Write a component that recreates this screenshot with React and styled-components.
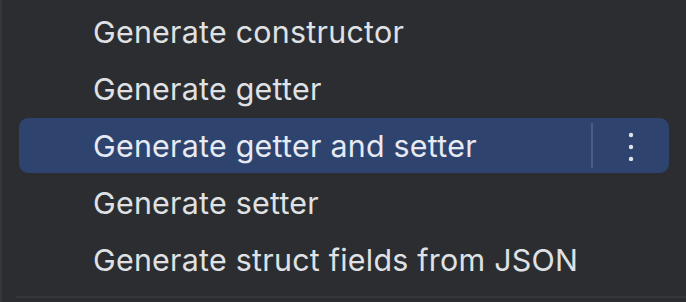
import styled, { createGlobalStyle } from "styled-components";

const GlobalStyle = createGlobalStyle`
  html, body {
    margin: 0;
    padding: 0;
    background: #2b2d30;
  }
  body {
    width: 686px;
    height: 302px;
    overflow: hidden;
    font-family: Inter, "Noto Sans", sans-serif;
  }
`;

const Popup = styled.div`
  box-sizing: border-box;
  width: 686px;
  height: 302px;
  background: #2b2d30;
  border-left: 2px solid #35373b;
  position: relative;
  display: flex;
  flex-direction: column;
  padding: 3px 17px 0 17px;

  &::after {
    content: "";
    position: absolute;
    left: 14px;
    right: 0;
    bottom: 4px;
    height: 2px;
    background: #35373b;
  }
`;

const Row = styled.div`
  height: 57px;
  display: flex;
  align-items: center;
  padding: 1px 0;
  box-sizing: border-box;
`;

const Item = styled.div`
  flex: 1;
  height: 55px;
  display: flex;
  align-items: center;
  border-radius: 9px;
  background: ${(p) => (p.$selected ? "#2e436e" : "transparent")};
  padding-left: 74px;
  box-sizing: border-box;
`;

const Label = styled.span`
  flex: 1;
  color: ${(p) => (p.$selected ? "#e6eaf3" : "#dfe1e5")};
  font-size: 30.4px;
  letter-spacing: 0.25px;
  white-space: nowrap;
`;

const Divider = styled.div`
  width: 2px;
  height: 45px;
  background: #4b5f86;
`;

const MoreButton = styled.div`
  width: 76px;
  height: 100%;
  display: flex;
  align-items: center;
  justify-content: center;
`;

const items = [
  "Generate constructor",
  "Generate getter",
  "Generate getter and setter",
  "Generate setter",
  "Generate struct fields from JSON",
];

const DotsIcon = () => (
  <svg width="6" height="30" viewBox="0 0 6 30">
    <circle cx="3" cy="4" r="2.2" fill="#dfe3ec" />
    <circle cx="3" cy="16" r="2.2" fill="#dfe3ec" />
    <circle cx="3" cy="28" r="2.2" fill="#dfe3ec" />
  </svg>
);

const App = () => {
  const selected = 2;
  return (
    <>
      <GlobalStyle />
      <Popup>
        {items.map((text, i) => (
          <Row key={text}>
            <Item $selected={i === selected}>
              <Label $selected={i === selected}>{text}</Label>
              {i === selected && (
                <>
                  <Divider />
                  <MoreButton>
                    <DotsIcon />
                  </MoreButton>
                </>
              )}
            </Item>
          </Row>
        ))}
      </Popup>
    </>
  );
};

export default App;
